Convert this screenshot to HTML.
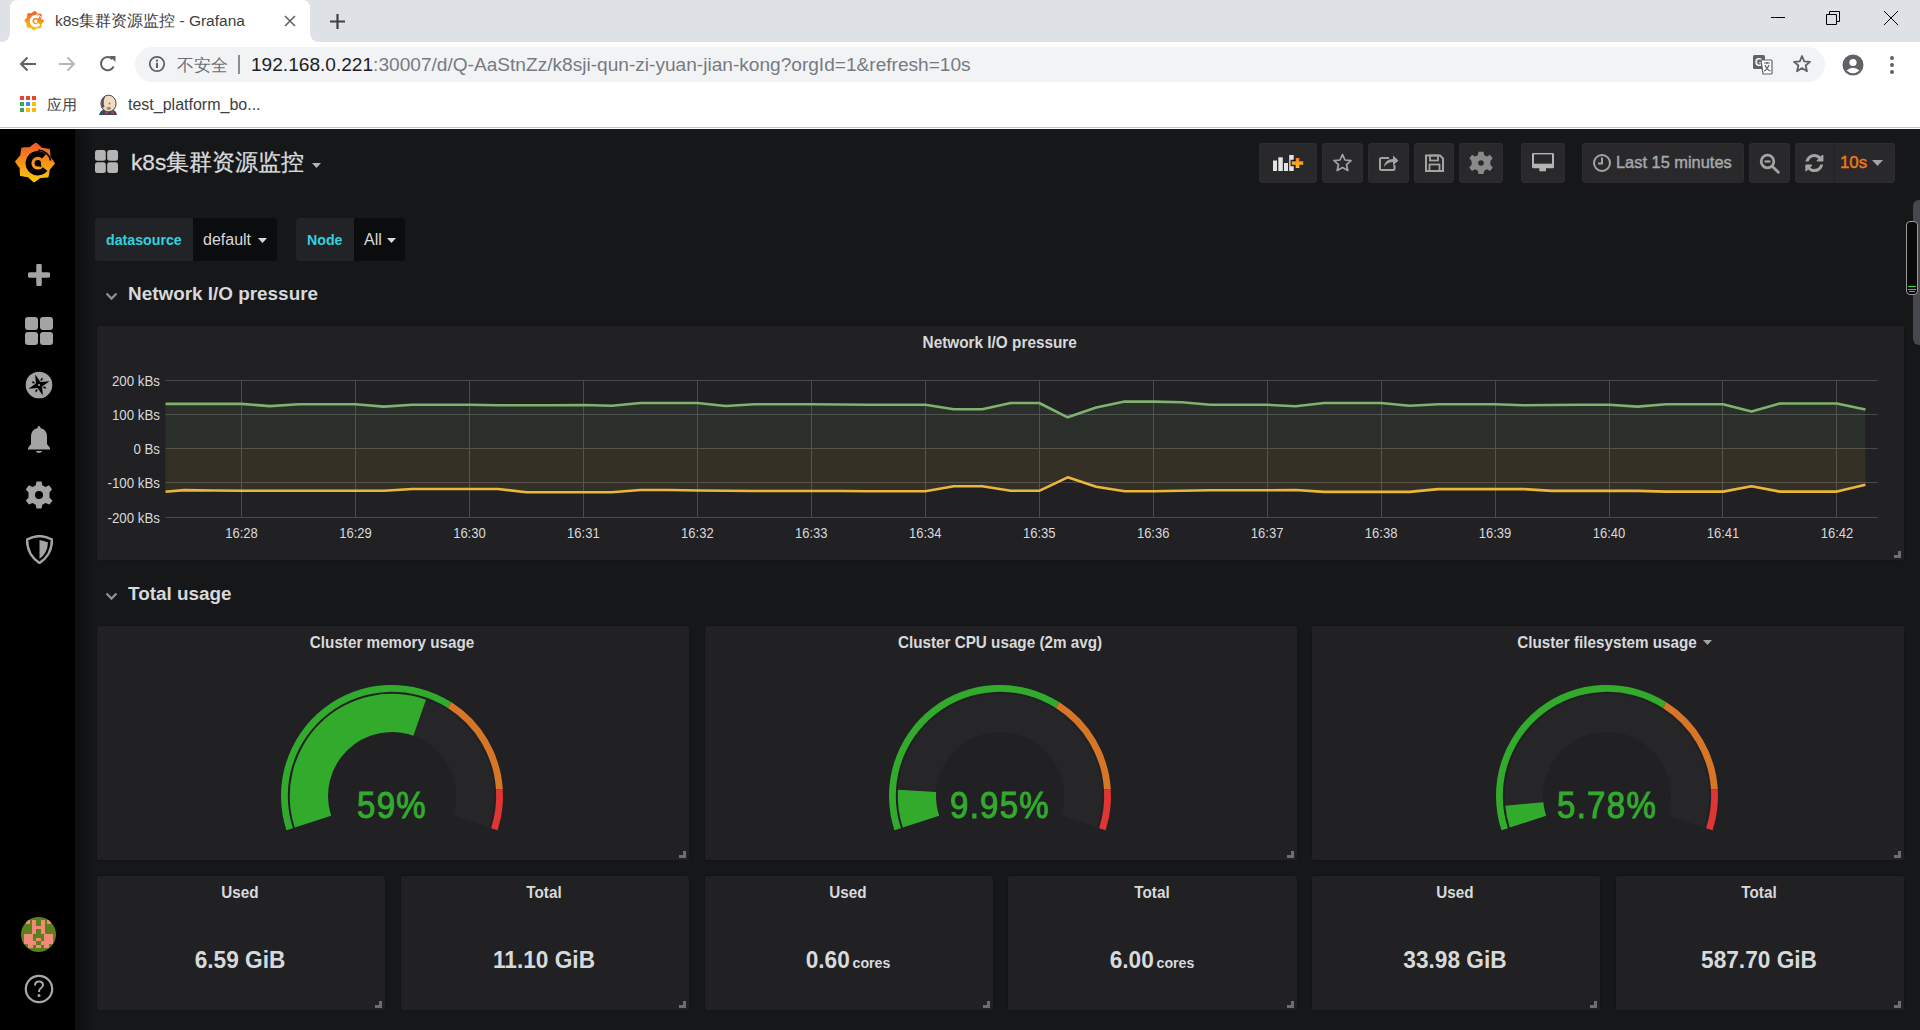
<!DOCTYPE html>
<html><head><meta charset="utf-8"><title>k8s</title>
<style>
*{box-sizing:border-box;margin:0;padding:0}
html,body{width:1920px;height:1030px;overflow:hidden;background:#161719;font-family:"Liberation Sans",sans-serif}
.a{position:absolute}
svg text{font-family:"Liberation Sans",sans-serif}
#tabs{left:0;top:0;width:1920px;height:42px;background:#dee1e6}
#toolbar{left:0;top:42px;width:1920px;height:42px;background:#fff}
#omni{left:135px;top:47px;width:1690px;height:35px;border-radius:18px;background:#f1f3f4}
#bookmarks{left:0;top:84px;width:1920px;height:45px;background:#fff}
#sep{left:0;top:127px;width:1920px;height:1px;background:#c4c4c4}
#graf{left:0;top:129px;width:1920px;height:901px;background:#161719;overflow:hidden}
#side{left:0;top:0;width:75px;height:901px;background:#000}
#sideshadow{left:75px;top:0;width:20px;height:901px;background:linear-gradient(90deg,#0e0f10,#161719)}
.nbtn{top:14px;height:40px;background:#29292b;border:1px solid #2d2d2f;border-radius:3px}
.panel{background:#212124;border:1px solid #141414;border-radius:3px}
.ptitle{color:#d8d9da;font-size:15px;font-weight:bold;text-align:center;width:100%;top:9px;left:0}
.rowt{color:#d8d9da;font-size:18.9px;font-weight:bold}
.resize{width:6px;height:6px}
</style></head><body>
<!-- Chrome tab strip -->
<div id="tabs" class="a"></div>
<svg class="a" style="left:0;top:0" width="330" height="42">
<path d="M0 42 Q10 42 10 32 L10 8 Q10 0 18 0 L302 0 Q310 0 310 8 L310 32 Q310 42 320 42 Z" fill="#fff"/>
</svg>
<div id="toolbar" class="a"></div>
<div id="omni" class="a"></div>
<div id="bookmarks" class="a"></div>
<div id="sep" class="a"></div>
<!-- tab content -->
<svg class="a" style="left:24px;top:10px" width="21" height="21" viewBox="0 0 41 42">
   <defs><linearGradient id="glf" x1="0" y1="0" x2="0" y2="1"><stop offset="0" stop-color="#f05a28"/><stop offset="1" stop-color="#fbca0a"/></linearGradient></defs>
   <path d="M20.96 2.32 L24.15 5.01 L26.68 7.40 L30.14 7.85 L34.24 8.62 L34.59 12.77 L34.69 16.26 L36.82 19.02 L39.18 22.46 L36.49 25.65 L34.10 28.18 L33.65 31.64 L32.88 35.74 L28.73 36.09 L25.24 36.19 L22.48 38.32 L19.04 40.68 L15.85 37.99 L13.32 35.60 L9.86 35.15 L5.76 34.38 L5.41 30.23 L5.31 26.74 L3.18 23.98 L0.82 20.54 L3.51 17.35 L5.90 14.82 L6.35 11.36 L7.12 7.26 L11.27 6.91 L14.76 6.81 L17.52 4.68 Z" fill="url(#glf)" stroke="url(#glf)" stroke-width="1.4" stroke-linejoin="round"/>
   <path d="M29.02 15.29 A9.3 9.3 0 1 0 30.13 27.93" fill="none" stroke="#fff" stroke-width="5.8"/>
   <path d="M23.26 9.01 A13.2 13.2 0 0 1 35.71 19.46" fill="none" stroke="#fff" stroke-width="1.6"/>
   <circle cx="22.8" cy="22.2" r="3.2" fill="#fff"/>
   <path d="M22.8 22.2 L26.0 25.599999999999998" stroke="#fff" stroke-width="2.2"/>
  </svg>
<div class="a" style="left:55px;top:12px;font-size:15.5px;color:#3c4043;white-space:nowrap;line-height:18px">k8s集群资源监控 - Grafana</div>
<svg class="a" style="left:284px;top:15px" width="12" height="12" viewBox="0 0 12 12"><path d="M1 1 L11 11 M11 1 L1 11" stroke="#5f6368" stroke-width="1.6"/></svg>
<svg class="a" style="left:329px;top:13px" width="17" height="17" viewBox="0 0 17 17"><path d="M8.5 1 V16 M1 8.5 H16" stroke="#3c4043" stroke-width="2.2"/></svg>
<!-- window controls -->
<svg class="a" style="left:1770px;top:10px" width="16" height="16"><path d="M1 7.5 H15" stroke="#000" stroke-width="1"/></svg>
<svg class="a" style="left:1825px;top:10px" width="16" height="16"><path d="M1.5 4.5 H11.5 V14.5 H1.5 Z M4.5 4.5 V1.5 H14.5 V11.5 H11.5" fill="none" stroke="#000" stroke-width="1"/></svg>
<svg class="a" style="left:1883px;top:10px" width="16" height="16"><path d="M1 1 L15 15 M15 1 L1 15" stroke="#000" stroke-width="1"/></svg>
<!-- nav buttons -->
<svg class="a" style="left:18px;top:55px" width="20" height="18" viewBox="0 0 20 18"><path d="M18 9 H3 M9.5 2.5 L3 9 L9.5 15.5" fill="none" stroke="#5f6368" stroke-width="2"/></svg>
<svg class="a" style="left:57px;top:55px" width="20" height="18" viewBox="0 0 20 18"><path d="M2 9 H17 M10.5 2.5 L17 9 L10.5 15.5" fill="none" stroke="#b6b8ba" stroke-width="2"/></svg>
<svg class="a" style="left:98px;top:54px" width="20" height="20" viewBox="0 0 20 20"><path d="M15.6 12.5 A6.6 6.6 0 1 1 14.5 5.2" fill="none" stroke="#5f6368" stroke-width="2"/><path d="M11.5 2 L17.5 2 L17.5 8 Z" fill="#5f6368"/></svg>
<!-- omnibox content -->
<svg class="a" style="left:148px;top:55px" width="18" height="18" viewBox="0 0 18 18"><circle cx="9" cy="9" r="7.2" fill="none" stroke="#5f6368" stroke-width="1.8"/><rect x="8" y="7.8" width="2" height="5.2" fill="#5f6368"/><rect x="8" y="4.6" width="2" height="2" fill="#5f6368"/></svg>
<div class="a" style="left:177px;top:54px;font-size:17.3px;color:#6b6f74;white-space:nowrap;line-height:22px">不安全</div>
<div class="a" style="left:238px;top:55px;width:2px;height:19px;background:#8a8d91"></div>
<div class="a" style="left:251px;top:54px;font-size:19.1px;color:#777b80;white-space:nowrap;line-height:22px"><span style="color:#202124">192.168.0.221</span>:30007/d/Q-AaStnZz/k8sji-qun-zi-yuan-jian-kong?orgId=1&amp;refresh=10s</div>
<!-- omnibox right icons -->
<svg class="a" style="left:1752px;top:54px" width="21" height="21" viewBox="0 0 21 21"><rect x="1" y="1" width="12" height="14" rx="1.5" fill="#5f6368"/><text x="3" y="12" font-size="10" font-weight="bold" fill="#fff" font-family="Liberation Sans">G</text><path d="M9 6 H19 Q20 6 20 7 V19 Q20 20 19 20 H11 Z" fill="#fff" stroke="#5f6368" stroke-width="1.2"/><path d="M12 9 H18 M15 8 V10 M13 11 Q15 16 18.5 17 M17 11 Q15 16 12 17" fill="none" stroke="#5f6368" stroke-width="1.2"/></svg>
<svg class="a" style="left:1792px;top:54px" width="20" height="20" viewBox="0 0 20 20"><path d="M10 2 L12.2 7.4 L18 7.8 L13.6 11.5 L15 17.2 L10 14.1 L5 17.2 L6.4 11.5 L2 7.8 L7.8 7.4 Z" fill="none" stroke="#5f6368" stroke-width="1.8" stroke-linejoin="round"/></svg>
<svg class="a" style="left:1842px;top:54px" width="22" height="22" viewBox="0 0 22 22"><circle cx="11" cy="11" r="10.5" fill="#5f6368"/><circle cx="11" cy="8.5" r="3.6" fill="#fff"/><path d="M4.5 16.5 Q11 11 17.5 16.5 Q11 22 4.5 16.5 Z" fill="#fff"/></svg>
<svg class="a" style="left:1888px;top:55px" width="8" height="20" viewBox="0 0 8 20"><circle cx="4" cy="3" r="2" fill="#5f6368"/><circle cx="4" cy="10" r="2" fill="#5f6368"/><circle cx="4" cy="17" r="2" fill="#5f6368"/></svg>
<!-- bookmarks -->
<svg class="a" style="left:19px;top:95px" width="18" height="18" viewBox="0 0 18 18">
<rect x="1" y="1" width="4" height="4" fill="#ea4335"/><rect x="7" y="1" width="4" height="4" fill="#ea4335"/><rect x="13" y="1" width="4" height="4" fill="#ea4335"/>
<rect x="1" y="7" width="4" height="4" fill="#34a853"/><rect x="7" y="7" width="4" height="4" fill="#4285f4"/><rect x="13" y="7" width="4" height="4" fill="#fbbc04"/>
<rect x="1" y="13" width="4" height="4" fill="#34a853"/><rect x="7" y="13" width="4" height="4" fill="#fbbc04"/><rect x="13" y="13" width="4" height="4" fill="#fbbc04"/></svg>
<div class="a" style="left:47px;top:96px;font-size:15px;color:#3c4043;white-space:nowrap;line-height:18px">应用</div>
<svg class="a" style="left:97px;top:94px" width="22" height="22" viewBox="0 0 22 22"><path d="M2 21 Q3 16.5 7 15.5 L15 15.5 Q19.5 16.5 20 21 Z" fill="#2f4f66"/><ellipse cx="11.5" cy="9.5" rx="7.6" ry="8.3" fill="#f1dcc0" stroke="#454545" stroke-width="1"/><path d="M5 14 Q3 9 5.5 4.5 Q7 3 8.5 2.5 Q5.5 7 7.5 13 Z" fill="#555"/><ellipse cx="11.8" cy="14.3" rx="2.3" ry="1.6" fill="#9a8a78"/><circle cx="12.5" cy="9.5" r="0.9" fill="#8b7b68"/><path d="M8.5 17 L11.5 18.2 L8.5 20 Z M17 17 L13.5 18.2 L17 20 Z" fill="#e02a20"/><circle cx="9.5" cy="18.5" r="1.6" fill="#e82a20"/><circle cx="15.5" cy="18.5" r="1.6" fill="#e82a20"/></svg>
<div class="a" style="left:128px;top:96px;font-size:16px;color:#3c4043;white-space:nowrap;line-height:18px">test_platform_bo...</div>


<div id="graf" class="a">
  <div id="side" class="a"></div>
  <div id="sideshadow" class="a"></div>
  <!-- grafana logo -->
  <svg class="a" style="left:15px;top:12px" width="41" height="42" viewBox="0 0 41 42">
   <defs><linearGradient id="glg" x1="0" y1="0" x2="0" y2="1"><stop offset="0" stop-color="#f05a28"/><stop offset="1" stop-color="#fbca0a"/></linearGradient></defs>
   <path d="M20.96 2.32 L24.15 5.01 L26.68 7.40 L30.14 7.85 L34.24 8.62 L34.59 12.77 L34.69 16.26 L36.82 19.02 L39.18 22.46 L36.49 25.65 L34.10 28.18 L33.65 31.64 L32.88 35.74 L28.73 36.09 L25.24 36.19 L22.48 38.32 L19.04 40.68 L15.85 37.99 L13.32 35.60 L9.86 35.15 L5.76 34.38 L5.41 30.23 L5.31 26.74 L3.18 23.98 L0.82 20.54 L3.51 17.35 L5.90 14.82 L6.35 11.36 L7.12 7.26 L11.27 6.91 L14.76 6.81 L17.52 4.68 Z" fill="url(#glg)" stroke="url(#glg)" stroke-width="1.4" stroke-linejoin="round"/>
   <path d="M29.02 15.29 A9.3 9.3 0 1 0 30.13 27.93" fill="none" stroke="#000" stroke-width="5.8"/>
   <path d="M23.26 9.01 A13.2 13.2 0 0 1 35.71 19.46" fill="none" stroke="#000" stroke-width="1.6"/>
   <circle cx="22.8" cy="22.2" r="3.2" fill="#000"/>
   <path d="M22.8 22.2 L26.0 25.599999999999998" stroke="#000" stroke-width="2.2"/>
  </svg>
  <!-- sidebar icons -->
  <svg class="a" style="left:28px;top:135px" width="22" height="22" viewBox="0 0 22 22"><path d="M11 2 V20 M2 11 H20" stroke="#a4a4a4" stroke-width="5.5" stroke-linecap="round"/></svg>
  <svg class="a" style="left:25px;top:188px" width="28" height="28" viewBox="0 0 28 28"><rect x="0" y="0" width="13" height="13" rx="3" fill="#a4a4a4"/><rect x="15" y="0" width="13" height="13" rx="3" fill="#a4a4a4"/><rect x="0" y="15" width="13" height="13" rx="3" fill="#a4a4a4"/><rect x="15" y="15" width="13" height="13" rx="3" fill="#a4a4a4"/></svg>
  <svg class="a" style="left:25px;top:242px" width="28" height="28" viewBox="0 0 28 28"><circle cx="14" cy="14" r="13.3" fill="#a4a4a4"/><path d="M10.17 3.48 L15.44 10.92 L24.52 10.17 L17.08 15.44 L17.83 24.52 L12.56 17.08 L3.48 17.83 L10.92 12.56 Z" fill="#000"/><path d="M15.77 10.19 L17.62 8.85 L17.47 6.57 L15.62 7.92 Z M17.81 15.77 L19.15 17.62 L21.43 17.47 L20.08 15.62 Z M12.23 17.81 L10.38 19.15 L10.53 21.43 L12.38 20.08 Z M10.19 12.23 L8.85 10.38 L6.57 10.53 L7.92 12.38 Z" fill="#000"/><circle cx="14" cy="14" r="1.1" fill="#a4a4a4"/></svg>
  <svg class="a" style="left:27px;top:296px" width="24" height="30" viewBox="0 0 24 30"><path d="M12 1 Q13.5 1 13.5 3 Q20 4.5 20 12 V19 L23 23 V24.5 H1 V23 L4 19 V12 Q4 4.5 10.5 3 Q10.5 1 12 1 Z" fill="#a4a4a4"/><path d="M8.5 26 Q12 30 15.5 26 Z" fill="#a4a4a4"/></svg>
  <svg class="a" style="left:25px;top:352px" width="28" height="28" viewBox="0 0 28 28"><path d="M11.5 0.5 H16.5 L17.3 4.3 L20.5 6 L24 4.3 L27 8.3 L24.5 11.5 V16.5 L27.5 19.5 L24.5 23.5 L20.5 22 L17.3 23.7 L16.5 27.5 H11.5 L10.7 23.7 L7.5 22 L3.8 23.6 L0.8 19.5 L3.5 16.5 V11.5 L0.8 8.5 L3.8 4.3 L7.5 6 L10.7 4.3 Z" fill="#a4a4a4"/><circle cx="14" cy="14" r="4" fill="#000"/></svg>
  <svg class="a" style="left:26px;top:406px" width="27" height="29" viewBox="0 0 27 29"><path d="M13.5 1 Q20 1.5 26 4.5 Q26 20 13.5 28 Q1 20 1 4.5 Q7 1.5 13.5 1 Z" fill="none" stroke="#a4a4a4" stroke-width="2.5"/><path d="M13.5 5 Q18 5.5 22 7.5 Q21.5 18.5 13.5 24 Z" fill="#a4a4a4"/></svg>
  <!-- avatar -->
  <svg class="a" style="left:21px;top:788px" width="35" height="35" viewBox="0 0 35 35"><defs><clipPath id="avc"><circle cx="17.5" cy="17.5" r="17.5"/></clipPath></defs>
   <g clip-path="url(#avc)"><rect width="35" height="35" fill="#5b7f1a"/>
   <g fill="#f08a7a">
   <rect x="5" y="3" width="4" height="4"/><rect x="26" y="3" width="4" height="4"/>
   <rect x="11" y="3" width="4" height="14"/><rect x="20" y="3" width="4" height="14"/><rect x="15" y="9" width="5" height="3"/>
   <rect x="3" y="17" width="9" height="10"/><rect x="23" y="17" width="9" height="10"/>
   <rect x="15" y="21" width="5" height="3"/><rect x="12" y="24" width="3" height="4"/><rect x="20" y="24" width="3" height="4"/>
   <rect x="7" y="27" width="5" height="4"/><rect x="23" y="27" width="5" height="4"/><rect x="15" y="28" width="5" height="3"/>
   </g></g></svg>
  <!-- help -->
  <svg class="a" style="left:24px;top:845px" width="30" height="30" viewBox="0 0 30 30"><circle cx="15" cy="15" r="13.2" fill="none" stroke="#a8a8a8" stroke-width="2.2"/><path d="M11 11.5 Q11 7.5 15 7.5 Q19 7.5 19 11 Q19 13 16.5 14.5 Q15 15.5 15 18" fill="none" stroke="#a8a8a8" stroke-width="2"/><circle cx="15" cy="21.5" r="1.5" fill="#a8a8a8"/></svg>

  <!-- dashnav -->
  <svg class="a" style="left:95px;top:21px" width="23" height="23" viewBox="0 0 23 23"><rect x="0" y="0" width="10.8" height="10.8" rx="2.5" fill="#b4b4b4"/><rect x="12.2" y="0" width="10.8" height="10.8" rx="2.5" fill="#b4b4b4"/><rect x="0" y="12.2" width="10.8" height="10.8" rx="2.5" fill="#b4b4b4"/><rect x="12.2" y="12.2" width="10.8" height="10.8" rx="2.5" fill="#b4b4b4"/></svg>
  <div class="a" style="left:131px;top:18px;font-size:22.7px;color:#d8d9da;white-space:nowrap;line-height:30px;-webkit-text-stroke:0.3px #d8d9da">k8s集群资源监控</div>
  <svg class="a" style="left:312px;top:34px" width="9" height="5"><path d="M0 0 H9 L4.5 5 Z" fill="#b4b4b4"/></svg>

  <div class="a nbtn" style="left:1259px;width:58px"></div>
  <div class="a nbtn" style="left:1322px;width:41px"></div>
  <div class="a nbtn" style="left:1368px;width:41px"></div>
  <div class="a nbtn" style="left:1414px;width:40px"></div>
  <div class="a nbtn" style="left:1459px;width:44px"></div>
  <div class="a nbtn" style="left:1521px;width:44px"></div>
  <div class="a nbtn" style="left:1582px;width:162px"></div>
  <div class="a nbtn" style="left:1749px;width:41px"></div>
  <div class="a nbtn" style="left:1795px;width:100px"></div>

  
  <svg class="a" style="left:1250px;top:0" width="670" height="80" viewBox="1250 129 670 80">
   <defs><linearGradient id="plusg" x1="0" y1="0" x2="0" y2="1"><stop offset="0" stop-color="#f57a2c"/><stop offset="1" stop-color="#ffc61a"/></linearGradient></defs>
   <g fill="#e4e4e4"><rect x="1273" y="160.5" width="4" height="10.5"/><rect x="1278.3" y="157.3" width="4.5" height="13.7"/><rect x="1284" y="163" width="4" height="8"/><rect x="1289.2" y="155" width="4.5" height="16"/></g>
   <path d="M1297.5 156.5 V169.5 M1290.5 163 H1304.5" stroke="#29292b" stroke-width="6.5"/>
   <path d="M1292 161.2 H1297.5 V157.9 M1297.5 157.9 V168.1 M1292 163 H1303.2" stroke="url(#plusg)" stroke-width="0"/>
   <path d="M1295.7 157.9 H1299.3 V161.2 H1303.2 V164.8 H1299.3 V168.1 H1295.7 V164.8 H1291.8 V161.2 H1295.7 Z" fill="url(#plusg)"/>
   <path d="M1342.5 154.5 L1345 160 L1351 160.6 L1346.5 164.6 L1347.8 170.5 L1342.5 167.5 L1337.2 170.5 L1338.5 164.6 L1334 160.6 L1340 160 Z" fill="none" stroke="#a4a4a4" stroke-width="1.7" stroke-linejoin="round"/>
   <path d="M1389 158 H1381.5 Q1380 158 1380 159.5 V168.5 Q1380 170 1381.5 170 H1393 Q1394.5 170 1394.5 168.5 V165" fill="none" stroke="#a4a4a4" stroke-width="2"/>
   <path d="M1384 167 Q1385 159 1393 159 V155.5 L1398.5 160.5 L1393 165.5 V162 Q1387.5 162 1384 167 Z" fill="#a4a4a4"/>
   <path d="M1426 155.5 H1440 L1443 158.5 V171 H1426 Z" fill="none" stroke="#a4a4a4" stroke-width="2"/>
   <rect x="1430" y="155.5" width="8" height="5" fill="none" stroke="#a4a4a4" stroke-width="1.8"/>
   <rect x="1429.5" y="164.5" width="10" height="6.5" fill="none" stroke="#a4a4a4" stroke-width="1.8"/>
   <path d="M1478.5 151.8 H1483.5 L1484.2 155.2 L1487 156.6 L1490 154.7 L1492.6 158.2 L1490.4 161 V164.8 L1492.8 167.5 L1490 171 L1487 169.3 L1484.2 170.8 L1483.5 174 H1478.5 L1477.8 170.8 L1475 169.3 L1472 171 L1469.3 167.5 L1471.6 164.8 V161 L1469.4 158.2 L1472 154.7 L1475 156.6 L1477.8 155.2 Z" fill="#8a8a8a"/>
   <circle cx="1481" cy="163" r="2.8" fill="#29292b"/>
   <rect x="1532" y="153" width="22" height="15.2" rx="1.2" fill="#b4b4b4"/><rect x="1534" y="154.4" width="18" height="9.3" fill="#29292b"/><rect x="1539.3" y="168" width="6.7" height="3.3" fill="#b4b4b4"/>
   <circle cx="1602" cy="163" r="8" fill="none" stroke="#a4a4a4" stroke-width="2"/><path d="M1602 157.5 V163.5 H1598" fill="none" stroke="#a4a4a4" stroke-width="2"/>
   <text x="1616" y="167.5" font-size="16.4" fill="#a6a7a9" stroke="#a6a7a9" stroke-width="0.45">Last 15 minutes</text>
   <circle cx="1767.5" cy="161.5" r="6.3" fill="none" stroke="#a4a4a4" stroke-width="2.8"/><path d="M1764.5 161.5 H1770.5" stroke="#a4a4a4" stroke-width="2.2"/><path d="M1772.2 166.2 L1778.3 172.3" stroke="#a4a4a4" stroke-width="2.8" stroke-linecap="round"/>
   <path transform="translate(1805.3 154) scale(0.0118)" d="M1511 928q0 5-1 7-64 268-268 434.5T764 1536q-146 0-282.5-55T238 1324l-129 129q-19 19-45 19t-45-19-19-45V960q0-26 19-45t45-19h448q26 0 45 19t19 45-19 45l-137 137q71 66 161 102t187 36q134 0 250-65t186-179q11-17 53-117 8-23 30-23h192q13 0 22.5 9.5t9.5 22.5zm25-800v448q0 26-19 45t-45 19h-448q-26 0-45-19t-19-45 19-45l138-138Q969 256 768 256q-134 0-250 65T332 500q-11 17-53 117-8 23-30 23H50q-13 0-22.5-9.5T18 608v-7q65-268 270-434.5T768 0q146 0 284 55.5T1297 212l130-129q19-19 45-19t45 19 19 45z" fill="#a4a4a4"/>
   <rect x="1834" y="143" width="1" height="40" fill="#242426"/>
   <text x="1840" y="167.5" font-size="16.8" fill="#eb7b18" stroke="#eb7b18" stroke-width="0.45">10s</text>
   <path d="M1872 160 H1883 L1877.5 166 Z" fill="#a4a4a4"/>
  </svg>
  <!-- scrollbar -->
  <div class="a" style="left:1913px;top:71px;width:12px;height:145px;border-radius:6px;background:#47484e"></div>
  <div class="a" style="left:1906px;top:92px;width:12px;height:74px;border-radius:4px;background:#0a0a0a;border:1px solid #9a9a9a"></div>
  <div class="a" style="left:1908px;top:157px;width:8px;height:1px;background:#3fd23f"></div>
  <div class="a" style="left:1908px;top:159.5px;width:8px;height:1.5px;background:#3fd23f"></div>
  <div class="a" style="left:1909px;top:162px;width:6px;height:1px;background:#3fd23f"></div>

  <!-- variables -->
  <div class="a" style="left:95px;top:89px;width:182px;height:43px;border-radius:3px;background:#0b0c0e;overflow:hidden">
    <div class="a" style="left:0;top:0;width:98px;height:43px;background:#212327"></div>
    <div class="a" style="left:11px;top:13px;font-size:14.2px;font-weight:bold;color:#32d1df;line-height:18px">datasource</div>
    <div class="a" style="left:108px;top:12px;font-size:16px;color:#d8d9da;line-height:20px">default</div>
    <svg class="a" style="left:163px;top:20px" width="9" height="5"><path d="M0 0 H9 L4.5 5 Z" fill="#d8d9da"/></svg>
  </div>
  <div class="a" style="left:296px;top:89px;width:109px;height:43px;border-radius:3px;background:#0b0c0e;overflow:hidden">
    <div class="a" style="left:0;top:0;width:58px;height:43px;background:#212327"></div>
    <div class="a" style="left:11px;top:13px;font-size:14.2px;font-weight:bold;color:#32d1df;line-height:18px">Node</div>
    <div class="a" style="left:68px;top:12px;font-size:16px;color:#d8d9da;line-height:20px">All</div>
    <svg class="a" style="left:91px;top:20px" width="9" height="5"><path d="M0 0 H9 L4.5 5 Z" fill="#d8d9da"/></svg>
  </div>

  <!-- row 1 -->
  <svg class="a" style="left:105px;top:163px" width="13" height="9" viewBox="0 0 13 9"><path d="M1.5 1.5 L6.5 6.5 L11.5 1.5" fill="none" stroke="#8e8e8e" stroke-width="2.4"/></svg>
  <div class="a rowt" style="left:128px;top:153px;line-height:24px">Network I/O pressure</div>

  <!-- graph panel -->
  <div class="a panel" style="left:96px;top:196px;width:1809px;height:236px"></div>

  <!-- row 2 -->
  <svg class="a" style="left:105px;top:463px" width="13" height="9" viewBox="0 0 13 9"><path d="M1.5 1.5 L6.5 6.5 L11.5 1.5" fill="none" stroke="#8e8e8e" stroke-width="2.4"/></svg>
  <div class="a rowt" style="left:128px;top:453px;line-height:24px">Total usage</div>

  <div class="a panel" style="left:96px;top:496px;width:594px;height:236px"></div>
  <div class="a panel" style="left:704px;top:496px;width:594px;height:236px"></div>
  <div class="a panel" style="left:1311px;top:496px;width:594px;height:236px"></div>

  <div class="a panel" style="left:96px;top:746px;width:290px;height:136px"></div>
  <div class="a panel" style="left:400px;top:746px;width:290px;height:136px"></div>
  <div class="a panel" style="left:704px;top:746px;width:290px;height:136px"></div>
  <div class="a panel" style="left:1007px;top:746px;width:291px;height:136px"></div>
  <div class="a panel" style="left:1311px;top:746px;width:290px;height:136px"></div>
  <div class="a panel" style="left:1615px;top:746px;width:290px;height:136px"></div>
<!--CHARTS--><svg class="a" style="left:0;top:0" width="1920" height="901" viewBox="0 129 1920 901">
<defs><clipPath id="plot"><rect x="165.5" y="370" width="1712" height="160"/></clipPath></defs>
<text x="0" y="0" transform="translate(999.70 347.80) scale(0.93 1)" text-anchor="middle" font-size="16.5" font-weight="bold" fill="#d8d9da" >Network I/O pressure</text>
<path d="M165.5 380.5 H1877.5 M165.5 414.5 H1877.5 M165.5 448.5 H1877.5 M165.5 482.5 H1877.5 M165.5 517.5 H1877.5 M241.5 380.5 V517.5 M355.5 380.5 V517.5 M469.5 380.5 V517.5 M583.5 380.5 V517.5 M697.5 380.5 V517.5 M811.5 380.5 V517.5 M925.5 380.5 V517.5 M1039.5 380.5 V517.5 M1153.5 380.5 V517.5 M1267.5 380.5 V517.5 M1381.5 380.5 V517.5 M1495.5 380.5 V517.5 M1609.5 380.5 V517.5 M1722.5 380.5 V517.5 M1836.5 380.5 V517.5" stroke="#4a4a4e" stroke-width="1" fill="none"/>
<text x="0" y="0" transform="translate(160.00 385.50) scale(0.95 1)" text-anchor="end" font-size="14" fill="#d8d9da" >200 kBs</text>
<text x="0" y="0" transform="translate(160.00 419.50) scale(0.95 1)" text-anchor="end" font-size="14" fill="#d8d9da" >100 kBs</text>
<text x="0" y="0" transform="translate(160.00 453.50) scale(0.95 1)" text-anchor="end" font-size="14" fill="#d8d9da" >0 Bs</text>
<text x="0" y="0" transform="translate(160.00 487.50) scale(0.95 1)" text-anchor="end" font-size="14" fill="#d8d9da" >-100 kBs</text>
<text x="0" y="0" transform="translate(160.00 522.50) scale(0.95 1)" text-anchor="end" font-size="14" fill="#d8d9da" >-200 kBs</text>
<text x="0" y="0" transform="translate(241.50 538.00) scale(0.93 1)" text-anchor="middle" font-size="14" fill="#d8d9da" >16:28</text>
<text x="0" y="0" transform="translate(355.46 538.00) scale(0.93 1)" text-anchor="middle" font-size="14" fill="#d8d9da" >16:29</text>
<text x="0" y="0" transform="translate(469.42 538.00) scale(0.93 1)" text-anchor="middle" font-size="14" fill="#d8d9da" >16:30</text>
<text x="0" y="0" transform="translate(583.38 538.00) scale(0.93 1)" text-anchor="middle" font-size="14" fill="#d8d9da" >16:31</text>
<text x="0" y="0" transform="translate(697.34 538.00) scale(0.93 1)" text-anchor="middle" font-size="14" fill="#d8d9da" >16:32</text>
<text x="0" y="0" transform="translate(811.30 538.00) scale(0.93 1)" text-anchor="middle" font-size="14" fill="#d8d9da" >16:33</text>
<text x="0" y="0" transform="translate(925.26 538.00) scale(0.93 1)" text-anchor="middle" font-size="14" fill="#d8d9da" >16:34</text>
<text x="0" y="0" transform="translate(1039.22 538.00) scale(0.93 1)" text-anchor="middle" font-size="14" fill="#d8d9da" >16:35</text>
<text x="0" y="0" transform="translate(1153.18 538.00) scale(0.93 1)" text-anchor="middle" font-size="14" fill="#d8d9da" >16:36</text>
<text x="0" y="0" transform="translate(1267.14 538.00) scale(0.93 1)" text-anchor="middle" font-size="14" fill="#d8d9da" >16:37</text>
<text x="0" y="0" transform="translate(1381.10 538.00) scale(0.93 1)" text-anchor="middle" font-size="14" fill="#d8d9da" >16:38</text>
<text x="0" y="0" transform="translate(1495.06 538.00) scale(0.93 1)" text-anchor="middle" font-size="14" fill="#d8d9da" >16:39</text>
<text x="0" y="0" transform="translate(1609.02 538.00) scale(0.93 1)" text-anchor="middle" font-size="14" fill="#d8d9da" >16:40</text>
<text x="0" y="0" transform="translate(1722.98 538.00) scale(0.93 1)" text-anchor="middle" font-size="14" fill="#d8d9da" >16:41</text>
<text x="0" y="0" transform="translate(1836.94 538.00) scale(0.93 1)" text-anchor="middle" font-size="14" fill="#d8d9da" >16:42</text>
<g clip-path="url(#plot)">
<polygon points="156.0,448.5 156.0,403.9 184.5,403.9 213.0,403.9 241.5,403.9 270.0,406.1 298.5,404.3 327.0,404.3 355.5,404.3 383.9,406.6 412.4,404.8 440.9,404.8 469.4,404.8 497.9,405.2 526.4,405.2 554.9,405.2 583.4,405.0 611.9,405.7 640.4,403.0 668.8,403.0 697.3,403.0 725.8,406.0 754.3,404.3 782.8,404.3 811.3,404.3 839.8,404.5 868.3,404.8 896.8,404.8 925.3,404.8 953.8,409.3 982.2,409.3 1010.7,403.0 1039.2,403.0 1067.7,417.3 1096.2,407.5 1124.7,401.6 1153.2,401.6 1181.7,402.3 1210.2,404.8 1238.7,404.8 1267.1,404.8 1295.6,406.3 1324.1,403.0 1352.6,403.0 1381.1,403.0 1409.6,405.7 1438.1,404.2 1466.6,404.2 1495.1,404.2 1523.5,405.2 1552.0,405.0 1580.5,404.8 1609.0,404.7 1637.5,406.6 1666.0,404.2 1694.5,404.2 1723.0,404.2 1751.5,411.5 1780.0,403.5 1808.4,403.5 1836.9,403.5 1865.4,409.6 1865.4,448.5" fill="#7eb26d" fill-opacity="0.1"/>
<polygon points="156.0,448.5 156.0,492.5 184.5,490.1 213.0,490.5 241.5,490.8 270.0,490.8 298.5,490.8 327.0,490.8 355.5,490.8 383.9,490.8 412.4,489.0 440.9,489.0 469.4,489.0 497.9,489.0 526.4,492.3 554.9,492.3 583.4,492.3 611.9,492.3 640.4,490.0 668.8,490.0 697.3,490.5 725.8,490.8 754.3,491.0 782.8,491.0 811.3,491.0 839.8,491.0 868.3,491.2 896.8,491.2 925.3,491.2 953.8,486.3 982.2,486.3 1010.7,490.8 1039.2,490.8 1067.7,477.3 1096.2,486.8 1124.7,491.2 1153.2,491.2 1181.7,490.8 1210.2,490.3 1238.7,490.3 1267.1,490.3 1295.6,490.0 1324.1,491.9 1352.6,491.9 1381.1,491.9 1409.6,491.9 1438.1,489.1 1466.6,489.1 1495.1,489.1 1523.5,489.1 1552.0,490.9 1580.5,490.9 1609.0,490.9 1637.5,490.9 1666.0,491.6 1694.5,491.6 1723.0,491.6 1751.5,486.2 1780.0,491.6 1808.4,491.6 1836.9,491.6 1865.4,484.7 1865.4,448.5" fill="#eab839" fill-opacity="0.1"/>
<polyline points="156.0,403.9 184.5,403.9 213.0,403.9 241.5,403.9 270.0,406.1 298.5,404.3 327.0,404.3 355.5,404.3 383.9,406.6 412.4,404.8 440.9,404.8 469.4,404.8 497.9,405.2 526.4,405.2 554.9,405.2 583.4,405.0 611.9,405.7 640.4,403.0 668.8,403.0 697.3,403.0 725.8,406.0 754.3,404.3 782.8,404.3 811.3,404.3 839.8,404.5 868.3,404.8 896.8,404.8 925.3,404.8 953.8,409.3 982.2,409.3 1010.7,403.0 1039.2,403.0 1067.7,417.3 1096.2,407.5 1124.7,401.6 1153.2,401.6 1181.7,402.3 1210.2,404.8 1238.7,404.8 1267.1,404.8 1295.6,406.3 1324.1,403.0 1352.6,403.0 1381.1,403.0 1409.6,405.7 1438.1,404.2 1466.6,404.2 1495.1,404.2 1523.5,405.2 1552.0,405.0 1580.5,404.8 1609.0,404.7 1637.5,406.6 1666.0,404.2 1694.5,404.2 1723.0,404.2 1751.5,411.5 1780.0,403.5 1808.4,403.5 1836.9,403.5 1865.4,409.6" fill="none" stroke="#7eb26d" stroke-width="2.6" stroke-linejoin="round"/>
<polyline points="156.0,492.5 184.5,490.1 213.0,490.5 241.5,490.8 270.0,490.8 298.5,490.8 327.0,490.8 355.5,490.8 383.9,490.8 412.4,489.0 440.9,489.0 469.4,489.0 497.9,489.0 526.4,492.3 554.9,492.3 583.4,492.3 611.9,492.3 640.4,490.0 668.8,490.0 697.3,490.5 725.8,490.8 754.3,491.0 782.8,491.0 811.3,491.0 839.8,491.0 868.3,491.2 896.8,491.2 925.3,491.2 953.8,486.3 982.2,486.3 1010.7,490.8 1039.2,490.8 1067.7,477.3 1096.2,486.8 1124.7,491.2 1153.2,491.2 1181.7,490.8 1210.2,490.3 1238.7,490.3 1267.1,490.3 1295.6,490.0 1324.1,491.9 1352.6,491.9 1381.1,491.9 1409.6,491.9 1438.1,489.1 1466.6,489.1 1495.1,489.1 1523.5,489.1 1552.0,490.9 1580.5,490.9 1609.0,490.9 1637.5,490.9 1666.0,491.6 1694.5,491.6 1723.0,491.6 1751.5,486.2 1780.0,491.6 1808.4,491.6 1836.9,491.6 1865.4,484.7" fill="none" stroke="#eab839" stroke-width="2.6" stroke-linejoin="round"/>
</g>
<text x="0" y="0" transform="translate(392.00 647.80) scale(0.925 1)" text-anchor="middle" font-size="16.5" font-weight="bold" fill="#d8d9da" >Cluster memory usage</text>
<path d="M286.43 830.30 A111 111 0 0 1 451.48 702.28 L447.83 708.02 A104.2 104.2 0 0 0 292.90 828.20 Z" fill="#32ab2d"/>
<path d="M451.48 702.28 A111 111 0 0 1 502.78 789.03 L495.99 789.46 A104.2 104.2 0 0 0 447.83 708.02 Z" fill="#d77627"/>
<path d="M502.78 789.03 A111 111 0 0 1 497.57 830.30 L491.10 828.20 A104.2 104.2 0 0 0 495.99 789.46 Z" fill="#e03535"/>
<path d="M294.80 827.58 A102.2 102.2 0 1 1 489.20 827.58 L452.87 815.78 A64 64 0 1 0 331.13 815.78 Z" fill="#262628"/>
<path d="M294.80 827.58 A102.2 102.2 0 0 1 426.01 699.63 L413.30 735.65 A64 64 0 0 0 331.13 815.78 Z" fill="#32ab2d"/>
<text x="392" y="0" text-anchor="middle" font-size="33" fill="#32ab2d" stroke="#32ab2d" stroke-width="0.9" letter-spacing="1.3" transform="translate(0 818) scale(1 1.12)">59%</text>
<text x="0" y="0" transform="translate(1000.00 647.80) scale(0.925 1)" text-anchor="middle" font-size="16.5" font-weight="bold" fill="#d8d9da" >Cluster CPU usage (2m avg)</text>
<path d="M894.43 830.30 A111 111 0 0 1 1059.48 702.28 L1055.83 708.02 A104.2 104.2 0 0 0 900.90 828.20 Z" fill="#32ab2d"/>
<path d="M1059.48 702.28 A111 111 0 0 1 1110.78 789.03 L1103.99 789.46 A104.2 104.2 0 0 0 1055.83 708.02 Z" fill="#d77627"/>
<path d="M1110.78 789.03 A111 111 0 0 1 1105.57 830.30 L1099.10 828.20 A104.2 104.2 0 0 0 1103.99 789.46 Z" fill="#e03535"/>
<path d="M902.80 827.58 A102.2 102.2 0 1 1 1097.20 827.58 L1060.87 815.78 A64 64 0 1 0 939.13 815.78 Z" fill="#262628"/>
<path d="M902.80 827.58 A102.2 102.2 0 0 1 897.99 789.78 L936.12 792.10 A64 64 0 0 0 939.13 815.78 Z" fill="#32ab2d"/>
<text x="1000" y="0" text-anchor="middle" font-size="33" fill="#32ab2d" stroke="#32ab2d" stroke-width="0.9" letter-spacing="1.3" transform="translate(0 818) scale(1 1.12)">9.95%</text>
<text x="0" y="0" transform="translate(1607.00 647.80) scale(0.925 1)" text-anchor="middle" font-size="16.5" font-weight="bold" fill="#d8d9da" >Cluster filesystem usage</text>
<path d="M1501.43 830.30 A111 111 0 0 1 1666.48 702.28 L1662.83 708.02 A104.2 104.2 0 0 0 1507.90 828.20 Z" fill="#32ab2d"/>
<path d="M1666.48 702.28 A111 111 0 0 1 1717.78 789.03 L1710.99 789.46 A104.2 104.2 0 0 0 1662.83 708.02 Z" fill="#d77627"/>
<path d="M1717.78 789.03 A111 111 0 0 1 1712.57 830.30 L1706.10 828.20 A104.2 104.2 0 0 0 1710.99 789.46 Z" fill="#e03535"/>
<path d="M1509.80 827.58 A102.2 102.2 0 1 1 1704.20 827.58 L1667.87 815.78 A64 64 0 1 0 1546.13 815.78 Z" fill="#262628"/>
<path d="M1509.80 827.58 A102.2 102.2 0 0 1 1505.27 805.82 L1543.30 802.15 A64 64 0 0 0 1546.13 815.78 Z" fill="#32ab2d"/>
<text x="1607" y="0" text-anchor="middle" font-size="33" fill="#32ab2d" stroke="#32ab2d" stroke-width="0.9" letter-spacing="1.3" transform="translate(0 818) scale(1 1.12)">5.78%</text>
<path d="M1703 640 H1712 L1707.5 645 Z" fill="#a4a4a4"/>
<text x="0" y="0" transform="translate(240.00 897.80) scale(0.925 1)" text-anchor="middle" font-size="16.5" font-weight="bold" fill="#d8d9da" >Used</text>
<text x="0" y="0" transform="translate(240.00 968.00) scale(0.945 1)" text-anchor="middle" font-size="24" font-weight="bold" fill="#d8d9da" >6.59 GiB</text>
<text x="0" y="0" transform="translate(544.00 897.80) scale(0.925 1)" text-anchor="middle" font-size="16.5" font-weight="bold" fill="#d8d9da" >Total</text>
<text x="0" y="0" transform="translate(544.00 968.00) scale(0.945 1)" text-anchor="middle" font-size="24" font-weight="bold" fill="#d8d9da" >11.10 GiB</text>
<text x="0" y="0" transform="translate(848.00 897.80) scale(0.925 1)" text-anchor="middle" font-size="16.5" font-weight="bold" fill="#d8d9da" >Used</text>
<text x="0" y="0" transform="translate(848 968) scale(0.945 1)" text-anchor="middle" font-weight="bold" fill="#d8d9da"><tspan font-size="24">0.60</tspan><tspan font-size="15" dx="3">cores</tspan></text>
<text x="0" y="0" transform="translate(1152.00 897.80) scale(0.925 1)" text-anchor="middle" font-size="16.5" font-weight="bold" fill="#d8d9da" >Total</text>
<text x="0" y="0" transform="translate(1152 968) scale(0.945 1)" text-anchor="middle" font-weight="bold" fill="#d8d9da"><tspan font-size="24">6.00</tspan><tspan font-size="15" dx="3">cores</tspan></text>
<text x="0" y="0" transform="translate(1455.00 897.80) scale(0.925 1)" text-anchor="middle" font-size="16.5" font-weight="bold" fill="#d8d9da" >Used</text>
<text x="0" y="0" transform="translate(1455.00 968.00) scale(0.945 1)" text-anchor="middle" font-size="24" font-weight="bold" fill="#d8d9da" >33.98 GiB</text>
<text x="0" y="0" transform="translate(1759.00 897.80) scale(0.925 1)" text-anchor="middle" font-size="16.5" font-weight="bold" fill="#d8d9da" >Total</text>
<text x="0" y="0" transform="translate(1759.00 968.00) scale(0.945 1)" text-anchor="middle" font-size="24" font-weight="bold" fill="#d8d9da" >587.70 GiB</text>
<path d="M1894 558 H1901 V551 H1898 V555 H1894 Z" fill="#6e6e70"/>
<path d="M679 858 H686 V851 H683 V855 H679 Z" fill="#6e6e70"/>
<path d="M1287 858 H1294 V851 H1291 V855 H1287 Z" fill="#6e6e70"/>
<path d="M1894 858 H1901 V851 H1898 V855 H1894 Z" fill="#6e6e70"/>
<path d="M375 1008 H382 V1001 H379 V1005 H375 Z" fill="#6e6e70"/>
<path d="M679 1008 H686 V1001 H683 V1005 H679 Z" fill="#6e6e70"/>
<path d="M983 1008 H990 V1001 H987 V1005 H983 Z" fill="#6e6e70"/>
<path d="M1287 1008 H1294 V1001 H1291 V1005 H1287 Z" fill="#6e6e70"/>
<path d="M1590 1008 H1597 V1001 H1594 V1005 H1590 Z" fill="#6e6e70"/>
<path d="M1894 1008 H1901 V1001 H1898 V1005 H1894 Z" fill="#6e6e70"/>
</svg><!--/CHARTS-->

</div>
</body></html>
